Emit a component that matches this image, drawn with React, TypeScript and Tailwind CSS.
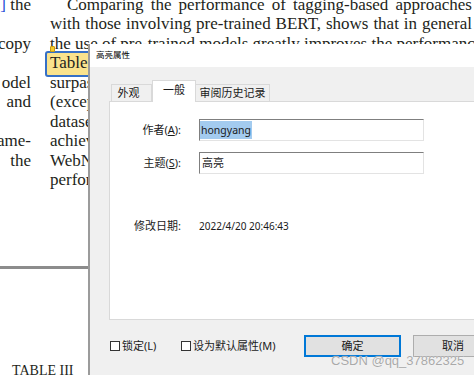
import React from 'react'

const serif = "font-['Liberation_Serif','Times_New_Roman',serif]"
const ui = "font-['Noto_Sans','Noto_Sans_CJK_SC',sans-serif]"

// left column of the PDF page, lines cut at the column edge
const leftLines = ['] the', '', 'copy', '', 'odel', 'and', '', 'ame-', 'the']

// only the first three lines show in full, the rest are hidden under the dialog
const rightLines = [
  'Comparing the performance of tagging-based approaches',
  'with those involving pre-trained BERT, shows that in general',
  'the use of pre-trained models greatly improves the performance',
  'Table',
  'surpasses',
  '(except',
  'datasets',
  'achieving',
  'WebNLG',
  'performance',
]

function PdfPage() {
  return (
    <div className={`${serif} text-[17px] leading-[19.5px] text-[#231f20] -mt-[5.5px]`}>
      <div className="flex">
        <div className="-ml-[40px] w-[71px] shrink-0 text-right">
          {leftLines.map((l, i) => (
            <div key={i} className="h-[19.5px] whitespace-nowrap">
              {l.startsWith(']') ? (
                <>
                  <span className="text-[#1f4fd8]">]</span>
                  {l.slice(1)}
                </>
              ) : (
                l
              )}
            </div>
          ))}
        </div>
        <div className="ml-[19px] w-[422px] shrink-0">
          {rightLines.map((l, i) => (
            <div
              key={i}
              className={`h-[19.5px] whitespace-nowrap ${i < 3 ? 'text-justify [text-align-last:justify]' : ''} ${i === 0 ? 'pl-[17px]' : ''}`}
            >
              {i === 3 ? (
                <span className="relative">
                  <span className="absolute -left-[5px] -right-[30px] -top-[2px] -bottom-[5px] -z-10 rounded-[3px] border-2 border-[#3670c6] bg-[#fae38d]" />
                  <span className="absolute left-0 -top-[7px] h-[6px] w-[5px] rounded-[1px] border border-[#c79a10] bg-[#f7cc2a]" />
                  {l}
                </span>
              ) : (
                l
              )}
            </div>
          ))}
        </div>
      </div>
      <div className="mt-[76.5px] h-[3px] w-[90px] bg-[#8c8c8c]" />
      <div className="mt-[94px] pl-[12px] text-[14px] leading-[16px]">TABLE III</div>
    </div>
  )
}

function Field({ label, hot, value, selected }: { label: string; hot: string; value: string; selected?: boolean }) {
  return (
    <div className="flex items-center">
      <div className="w-[71px] text-right text-[11px] text-[#1a1a1a]">
        {label}(<span className="underline">{hot}</span>):
      </div>
      <div className="ml-[18px] flex h-[22px] w-[225px] items-center border border-[#e3e3e3] border-l-[#7f7f7f] border-t-[#7f7f7f] bg-white text-[10px] text-[#1a1a1a]">
        {selected ? (
          <span className="bg-[#a3cbef] px-[1px] text-[10.5px] leading-[18px]">{value}</span>
        ) : (
          <span className="pl-[2px] text-[11px]">{value}</span>
        )}
      </div>
    </div>
  )
}

function Dialog() {
  return (
    <div className={`${ui} absolute left-[88px] top-[44px] h-[340px] w-[430px] border-l-2 border-[#9b9b9b] bg-[#f0f0f0]`}>
      <div className="flex h-[23px] items-center bg-white pl-[6px] text-[8.5px] text-black">高亮属性</div>
      <div className="pl-[19px] pt-[13px]">
        {/* tabs */}
        <div className="flex h-[21px] items-end pl-[2px] text-[11px] text-[#1a1a1a]">
          <div className="flex h-[17px] w-[41px] items-center justify-center border border-b-0 border-[#d9d9d9] bg-[#f0f0f0] pr-[6px]">外观</div>
          <div className="relative z-10 -mb-px flex h-[22px] w-[44px] items-center justify-center border border-b-0 border-[#d9d9d9] bg-white pb-[2px]">一般</div>
          <div className="flex h-[17px] w-[74px] items-center justify-center border border-b-0 border-l-0 border-[#d9d9d9] bg-[#f0f0f0]">审阅历史记录</div>
        </div>
        <div className="h-[219px] border border-[#d9d9d9] bg-white pt-[17px]">
          <Field label="作者" hot="A" value="hongyang" selected />
          <div className="mt-[11px]">
            <Field label="主题" hot="S" value="高亮" />
          </div>
          <div className="mt-[43px] flex h-[18px] items-center text-[#1a1a1a]">
            <div className="w-[71px] text-right text-[11px]">修改日期:</div>
            <div className="ml-[18px] text-[10px]">2022/4/20 20:46:43</div>
          </div>
        </div>
        {/* bottom row */}
        <div className="mt-[15px] flex h-[22px] items-center pl-[1px] text-[11px] text-[#1a1a1a]">
          <div className="flex w-[71px] items-center">
            <span className="h-[10px] w-[10px] border border-[#333] bg-white" />
            <span className="ml-[2px]">锁定(L)</span>
          </div>
          <div className="flex w-[123px] items-center">
            <span className="h-[10px] w-[10px] border border-[#333] bg-white" />
            <span className="ml-[2px]">设为默认属性(M)</span>
          </div>
          <div className="flex h-[22px] w-[97px] items-center justify-center border-2 border-[#0078d7] bg-[#e1e1e1]">确定</div>
          <div className="ml-[12px] flex h-[22px] w-[80px] items-center justify-center border border-[#adadad] bg-[#e1e1e1]">取消</div>
        </div>
      </div>
    </div>
  )
}

export default function App() {
  return (
    <div className="relative isolate h-[375px] w-[474px] overflow-hidden bg-white">
      <PdfPage />
      <Dialog />
      <div className="absolute left-[331px] top-[352px] font-['Liberation_Sans',Arial,sans-serif] text-[13px] leading-[18px] text-[#a9a9a9] [text-shadow:0_0_1px_#fff]">
        CSDN @qq_37862325
      </div>
    </div>
  )
}
